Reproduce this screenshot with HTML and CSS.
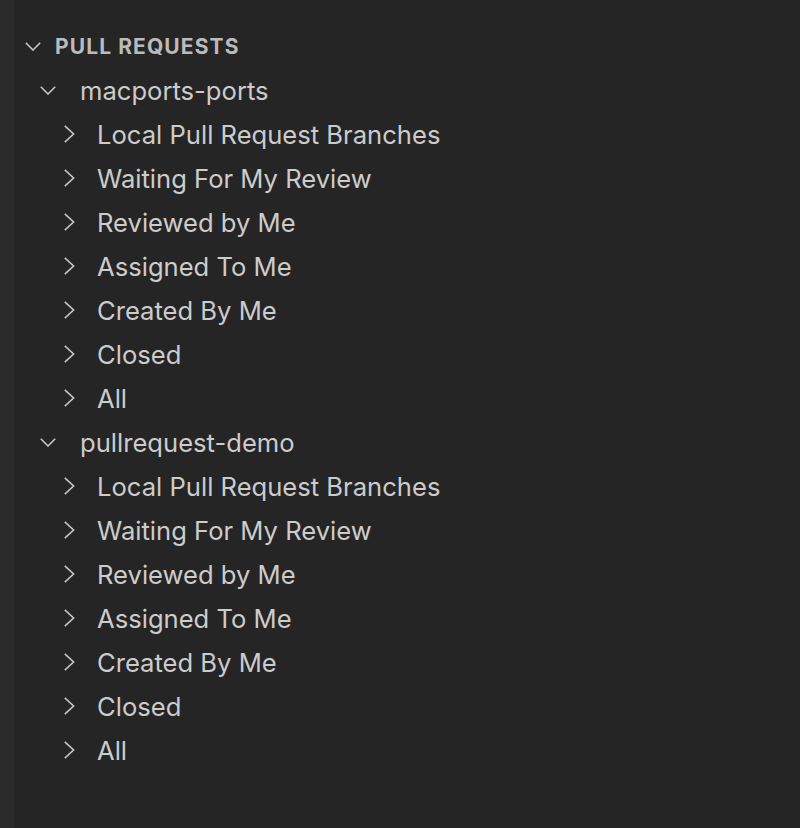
FILE: index.html
```html
<!DOCTYPE html>
<html lang="en">
<head>
  <meta charset="UTF-8" />
  <title>Pull Requests</title>
  <link rel="stylesheet" href="styles.css">
</head>
<body>
  <div class="activity-strip"></div>

  <div class="sidebar">
    <div class="row section">
      <span class="twistie"><svg viewBox="0 0 16 9"><polyline points="0.8,0.8 8,8 15.2,0.8" /></svg></span>
      <span class="label">PULL REQUESTS</span>
    </div>

    <div class="row repo">
      <span class="twistie"><svg viewBox="0 0 16 9"><polyline points="0.8,0.8 8,8 15.2,0.8" /></svg></span>
      <span class="label">macports-ports</span>
    </div>
    <div class="row query"><span class="twistie"><svg viewBox="0 0 11 18"><polyline points="0.8,0.8 9.6,9 0.8,17.2" /></svg></span><span class="label">Local Pull Request Branches</span></div>
    <div class="row query"><span class="twistie"><svg viewBox="0 0 11 18"><polyline points="0.8,0.8 9.6,9 0.8,17.2" /></svg></span><span class="label">Waiting For My Review</span></div>
    <div class="row query"><span class="twistie"><svg viewBox="0 0 11 18"><polyline points="0.8,0.8 9.6,9 0.8,17.2" /></svg></span><span class="label">Reviewed by Me</span></div>
    <div class="row query"><span class="twistie"><svg viewBox="0 0 11 18"><polyline points="0.8,0.8 9.6,9 0.8,17.2" /></svg></span><span class="label">Assigned To Me</span></div>
    <div class="row query"><span class="twistie"><svg viewBox="0 0 11 18"><polyline points="0.8,0.8 9.6,9 0.8,17.2" /></svg></span><span class="label">Created By Me</span></div>
    <div class="row query"><span class="twistie"><svg viewBox="0 0 11 18"><polyline points="0.8,0.8 9.6,9 0.8,17.2" /></svg></span><span class="label">Closed</span></div>
    <div class="row query"><span class="twistie"><svg viewBox="0 0 11 18"><polyline points="0.8,0.8 9.6,9 0.8,17.2" /></svg></span><span class="label">All</span></div>

    <div class="row repo">
      <span class="twistie"><svg viewBox="0 0 16 9"><polyline points="0.8,0.8 8,8 15.2,0.8" /></svg></span>
      <span class="label">pullrequest-demo</span>
    </div>
    <div class="row query"><span class="twistie"><svg viewBox="0 0 11 18"><polyline points="0.8,0.8 9.6,9 0.8,17.2" /></svg></span><span class="label">Local Pull Request Branches</span></div>
    <div class="row query"><span class="twistie"><svg viewBox="0 0 11 18"><polyline points="0.8,0.8 9.6,9 0.8,17.2" /></svg></span><span class="label">Waiting For My Review</span></div>
    <div class="row query"><span class="twistie"><svg viewBox="0 0 11 18"><polyline points="0.8,0.8 9.6,9 0.8,17.2" /></svg></span><span class="label">Reviewed by Me</span></div>
    <div class="row query"><span class="twistie"><svg viewBox="0 0 11 18"><polyline points="0.8,0.8 9.6,9 0.8,17.2" /></svg></span><span class="label">Assigned To Me</span></div>
    <div class="row query"><span class="twistie"><svg viewBox="0 0 11 18"><polyline points="0.8,0.8 9.6,9 0.8,17.2" /></svg></span><span class="label">Created By Me</span></div>
    <div class="row query"><span class="twistie"><svg viewBox="0 0 11 18"><polyline points="0.8,0.8 9.6,9 0.8,17.2" /></svg></span><span class="label">Closed</span></div>
    <div class="row query"><span class="twistie"><svg viewBox="0 0 11 18"><polyline points="0.8,0.8 9.6,9 0.8,17.2" /></svg></span><span class="label">All</span></div>
  </div>
</body>
</html>
```

FILE: styles.css
```css
body {
  margin: 0;
  display: flex;
  min-height: 100vh;
  background: #252526;
  font-family: Inter, "Open Sans", sans-serif;
  color: #cccccc;
}

.activity-strip {
  width: 14px;
  background: #2b2b2b;
}

.sidebar {
  flex: 1;
  padding-top: 24px;
}

.row {
  height: 44px;
  display: flex;
  align-items: center;
  white-space: nowrap;
}

.twistie {
  width: 32px;
  display: flex;
  justify-content: center;
  align-items: center;
}

.twistie polyline {
  fill: none;
  stroke: #c5c5c5;
  stroke-width: 1.6;
}

.section {
  padding-left: 3px;
}

.section .twistie svg,
.repo .twistie svg {
  width: 16px;
  height: 9px;
}

.section .label {
  margin-left: 6px;
  font-size: 21px;
  font-weight: 700;
  letter-spacing: 1.1px;
  color: #bbbbbb;
}

.repo {
  padding-left: 18px;
}

.repo .label {
  margin-left: 16px;
  font-size: 25.6px;
}

.query {
  padding-left: 39px;
}

.query .twistie svg {
  width: 11px;
  height: 18px;
}

.query .label {
  margin-left: 12px;
  font-size: 25.6px;
}
```
